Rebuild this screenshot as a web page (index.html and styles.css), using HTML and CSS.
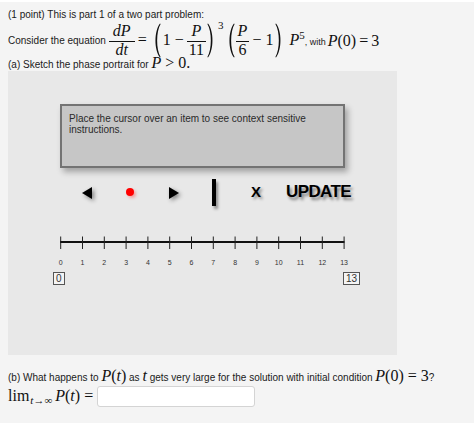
FILE: index.html
```html
<!DOCTYPE html>
<html>
<head>
<meta charset="utf-8">
<link rel="stylesheet" href="styles.css">
</head>
<body>
<div class="page">
  <div class="line1">(1 point) This is part 1 of a two part problem:</div>
  <div class="eqline">
    <span class="txt">Consider the equation</span>
    <span class="math m-eq">
      <span class="frac fr-dp"><span class="num"><i>dP</i></span><span class="den"><i>dt</i></span></span>
      <span class="rel">=</span>
      <svg class="bigp" width="9" height="35" viewBox="0 0 9 35"><path d="M8 0.5 C2 8 2 27 8 34.5 L8.6 34 C4 26.5 4 8.5 8.6 1 Z"/></svg>
      <span class="n">1</span>
      <span class="bin">−</span>
      <span class="frac"><span class="num"><i>P</i></span><span class="den">11</span></span>
      <svg class="bigp" width="9" height="35" viewBox="0 0 9 35"><path d="M1 0.5 C7 8 7 27 1 34.5 L0.4 34 C5 26.5 5 8.5 0.4 1 Z"/></svg>
      <sup class="sup3">3</sup>
      <svg class="bigp p2" width="9" height="35" viewBox="0 0 9 35"><path d="M8 0.5 C2 8 2 27 8 34.5 L8.6 34 C4 26.5 4 8.5 8.6 1 Z"/></svg>
      <span class="frac"><span class="num"><i>P</i></span><span class="den">6</span></span>
      <span class="bin">−</span>
      <span class="n">1</span>
      <svg class="bigp" width="9" height="35" viewBox="0 0 9 35"><path d="M1 0.5 C7 8 7 27 1 34.5 L0.4 34 C5 26.5 5 8.5 0.4 1 Z"/></svg>
      <span class="p5"><i>P</i><sup>5</sup></span>
    </span>
    <span class="with">, with</span>
    <span class="math m-ic"><i>P</i>(0)<span class="rel">=</span>3</span>
  </div>
  <div class="line-a">(a) Sketch the phase portrait for <span class="math"><i>P</i><span class="rel">&gt;</span>0.</span></div>

  <div class="applet">
    <div class="instr">Place the cursor over an item to see context sensitive instructions.</div>
    <div class="controls">
      <span class="tri tri-l"></span>
      <span class="dot"></span>
      <span class="tri tri-r"></span>
      <span class="vbar"></span>
      <span class="xbtn">X</span>
      <span class="upd">UPDATE</span>
    </div>
    <svg class="nline" width="389" height="36" viewBox="0 0 389 36">
      <line x1="52" y1="9" x2="336.5" y2="9" stroke="#111" stroke-width="2"/>
      <g stroke="#222" stroke-width="1">
        <line x1="52.7" y1="3.5" x2="52.7" y2="16"/>
        <line x1="74.5" y1="3.5" x2="74.5" y2="16"/>
        <line x1="96.3" y1="3.5" x2="96.3" y2="16"/>
        <line x1="118.1" y1="3.5" x2="118.1" y2="16"/>
        <line x1="139.9" y1="3.5" x2="139.9" y2="16"/>
        <line x1="161.7" y1="3.5" x2="161.7" y2="16"/>
        <line x1="183.5" y1="3.5" x2="183.5" y2="16"/>
        <line x1="205.3" y1="3.5" x2="205.3" y2="16"/>
        <line x1="227.1" y1="3.5" x2="227.1" y2="16"/>
        <line x1="248.9" y1="3.5" x2="248.9" y2="16"/>
        <line x1="270.7" y1="3.5" x2="270.7" y2="16"/>
        <line x1="292.5" y1="3.5" x2="292.5" y2="16"/>
        <line x1="314.3" y1="3.5" x2="314.3" y2="16"/>
        <line x1="336.1" y1="3.5" x2="336.1" y2="16"/>
      </g>
      <g class="lbl" text-anchor="middle">
        <text x="52.7" y="32">0</text>
        <text x="74.5" y="32">1</text>
        <text x="96.3" y="32">2</text>
        <text x="118.1" y="32">3</text>
        <text x="139.9" y="32">4</text>
        <text x="161.7" y="32">5</text>
        <text x="183.5" y="32">6</text>
        <text x="205.3" y="32">7</text>
        <text x="227.1" y="32">8</text>
        <text x="248.9" y="32">9</text>
        <text x="270.7" y="32">10</text>
        <text x="292.5" y="32">11</text>
        <text x="314.3" y="32">12</text>
        <text x="336.1" y="32">13</text>
      </g>
    </svg>
    <div class="bounds">
      <span class="bbox">0</span>
      <span class="bbox">13</span>
    </div>
  </div>

  <div class="line-b">(b) What happens to <span class="math"><i>P</i>(<i>t</i>)</span> as <span class="math"><i>t</i></span> gets very large for the solution with initial condition <span class="math"><i>P</i>(0)<span class="rel">=</span>3</span>?</div>
  <div class="line-lim">
    <span class="math lim">lim<sub><i>t</i>→∞</sub></span>
    <span class="math"><i>P</i>(<i>t</i>)<span class="rel">=</span></span>
    <span class="answer"></span>
  </div>
</div>
</body>
</html>
```

FILE: styles.css
```css
html, body {
  margin: 0;
  padding: 0;
  background: #ffffff;
}
.page {
  margin-top: 2px;
  height: 421px;
  box-sizing: border-box;
  background: #f4f4f4;
  padding: 6px 8px 0 8px;
  font-family: "Liberation Sans", Arial, sans-serif;
  font-size: 10px;
  color: #1a1a1a;
}
.line1 {
  line-height: 14px;
  height: 14px;
}
.math {
  font-family: "Liberation Serif", "Times New Roman", serif;
  font-size: 16px;
  color: #111;
}
.math i {
  font-style: italic;
}
.rel {
  margin: 0 4px;
}
.m-ic .rel {
  margin: 0 3px;
}
.eqline {
  display: flex;
  align-items: center;
  height: 37px;
}
.eqline .txt {
  margin-right: 4px;
}
.m-eq {
  display: inline-flex;
  align-items: center;
  margin-top: -1px;
}
.frac {
  display: inline-flex;
  flex-direction: column;
  align-items: center;
  margin: 0 1px;
}
.frac .num {
  line-height: 14px;
  padding: 0 1px 3px 1px;
}
.frac .den {
  line-height: 14px;
  border-top: 1px solid #111;
  padding: 1px 1px 0 1px;
  width: 100%;
  text-align: center;
}
.fr-dp .num, .fr-dp .den {
  padding-left: 2px;
  padding-right: 2px;
}
.bigp {
  display: block;
  fill: #111;
  margin: 0 1px;
}
.bigp.p2 {
  margin-left: 2px;
}
.n {
  margin: 0 1px;
}
.bin {
  margin: 0 3px;
}
.sup3 {
  font-size: 11px;
  align-self: flex-start;
  margin-top: -4px;
  margin-left: 1px;
}
.p5 {
  margin-left: 4px;
}
.p5 sup {
  font-size: 11px;
  vertical-align: 6px;
  line-height: 0;
}
.with {
  font-size: 9px;
  margin-right: 2px;
  margin-top: 3px;
}
.line-a {
  line-height: 14px;
  height: 14px;
  margin-top: -3px;
}
.applet {
  margin-top: 1px;
  width: 389px;
  height: 284px;
  background: #e8e8e8;
  box-sizing: border-box;
  padding-top: 33px;
}
.instr {
  margin-left: 52px;
  width: 285px;
  height: 64px;
  box-sizing: border-box;
  border: 2px solid #737373;
  background: #c6c6c6;
  box-shadow: 3px 4px 6px rgba(0, 0, 0, 0.3);
  padding: 7px 8px 0 7px;
  font-size: 10px;
  line-height: 11px;
  color: #2a2a2a;
}
.controls {
  display: flex;
  align-items: center;
  height: 28px;
  margin-top: 10px;
  padding-left: 74px;
}
.tri {
  width: 0;
  height: 0;
  border-top: 6px solid transparent;
  border-bottom: 6px solid transparent;
  filter: drop-shadow(2px 2px 2px rgba(0, 0, 0, 0.45));
  margin-top: 1px;
}
.tri-l {
  border-right: 10px solid #000;
}
.tri-r {
  border-left: 10px solid #000;
  margin-left: 35px;
}
.dot {
  width: 8px;
  height: 8px;
  border-radius: 50%;
  background: #ff0000;
  margin-left: 34px;
  box-shadow: 2px 2px 3px rgba(255, 80, 80, 0.45);
}
.vbar {
  width: 4px;
  height: 27px;
  background: #000;
  margin-left: 33px;
  box-shadow: 2px 3px 3px rgba(0, 0, 0, 0.4);
}
.xbtn {
  margin-left: 35px;
  font-weight: bold;
  font-size: 15px;
  line-height: 16px;
  color: #000;
  text-shadow: 2px 2px 3px rgba(0, 0, 0, 0.45);
}
.upd {
  margin-left: 25px;
  font-weight: bold;
  font-size: 17px;
  letter-spacing: -0.6px;
  line-height: 18px;
  color: #000;
  text-shadow: 2px 3px 3px rgba(0, 0, 0, 0.45);
}
.nline {
  display: block;
  margin-top: 27px;
}
.lbl {
  font-family: "Liberation Sans", Arial, sans-serif;
  font-size: 7px;
  fill: #333;
}
.bounds {
  display: flex;
  justify-content: space-between;
  padding: 0 37px 0 45px;
  margin-top: 3px;
}
.bbox {
  height: 13px;
  line-height: 12px;
  box-sizing: border-box;
  border: 1px solid #555;
  background: #f4f4f4;
  padding: 0 2px;
  font-size: 10px;
  color: #333;
}
.line-b {
  margin-top: 12px;
  line-height: 18px;
  height: 18px;
}
.line-lim {
  display: flex;
  align-items: center;
  height: 22px;
}
.lim sub {
  font-size: 11px;
  vertical-align: -3px;
  line-height: 0;
  margin-left: 1px;
}
.lim {
  margin-right: 3px;
}
.answer {
  width: 158px;
  height: 21px;
  box-sizing: border-box;
  background: #fff;
  border: 1px solid #d4d4d4;
  border-radius: 3px;
  margin-left: 0;
}
```
